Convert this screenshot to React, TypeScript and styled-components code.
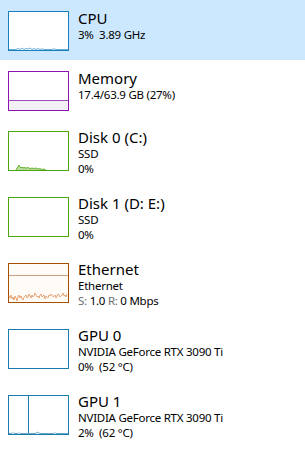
import React from "react";
import styled, { createGlobalStyle } from "styled-components";

const Global = createGlobalStyle`
  html, body { margin: 0; padding: 0; background: #ffffff; }
  body { font-family: "Segoe UI", "Noto Sans", "Open Sans", sans-serif; color: #000; }
`;

const List = styled.div`
  width: 305px;
  display: flex;
  flex-direction: column;
  background: #ffffff;
`;

const Row = styled.div<{ $lines: number; $selected?: boolean }>`
  display: flex;
  align-items: flex-start;
  gap: 9px;
  height: ${(p) => (p.$lines === 2 ? 60 : 66)}px;
  box-sizing: border-box;
  padding: 11px 0 0 8px;
  background: ${(p) => (p.$selected ? "#cce8ff" : "transparent")};
`;

const Graph = styled.svg`
  flex: none;
  display: block;
  width: 61px;
  height: 40px;
`;

const Info = styled.div<{ $lines: number }>`
  display: flex;
  flex-direction: column;
  margin-top: ${(p) => (p.$lines === 2 ? -2 : -3)}px;
`;

const Title = styled.div`
  font-size: 15px;
  line-height: 18px;
  color: #000;
  white-space: nowrap;
`;

const Sub = styled.div`
  font-size: 11.5px;
  letter-spacing: -0.25px;
  line-height: 15px;
  color: #000;
  white-space: nowrap;
`;

const Dim = styled.span`
  color: #6d6d6d;
`;

const Frame = ({ color, fill = "#ffffff" }: { color: string; fill?: string }) => (
  <rect x={0.5} y={0.5} width={60} height={39} fill={fill} stroke={color} strokeWidth={1} />
);

const CpuGraph = () => (
  <Graph viewBox="0 0 61 40">
    <Frame color="#1b7fbe" />
    <polyline
      points="1,38.5 8,38.5 10,37.5 12,38.5 14,37 16,38.5 18,37.5 20,38 22,37 24,38.5 26,37.5 28,38.5 30,37.5 32,38.5 34,37.8 36,38.5 44,38.5 46,37.8 48,38.5 60,38.5"
      fill="none"
      stroke="#6aaed8"
      strokeWidth={1}
    />
  </Graph>
);

const MemGraph = () => (
  <Graph viewBox="0 0 61 40">
    <Frame color="#8b12ae" />
    <rect x={1} y={29} width={59} height={10} fill="#f4f1f6" />
    <line x1={1} y1={29.5} x2={60} y2={29.5} stroke="#9c4fb8" strokeWidth={1} />
  </Graph>
);

const diskPts =
  "8,39 9,37 10,36 11,34 12,36 13,37 14,36 15,37 16,36.5 18,37 20,36.5 22,37.5 24,37 26,37.5 28,37 30,38 32,37.5 34,38.5 36,38 38,39";

const DiskGraph = ({ spikes }: { spikes?: boolean }) => (
  <Graph viewBox="0 0 61 40">
    <Frame color="#4da60c" />
    {spikes && (
      <>
        <polygon points={diskPts} fill="#b7dc9b" />
        <polyline points={diskPts} fill="none" stroke="#4da60c" strokeWidth={0.8} />
      </>
    )}
  </Graph>
);

const noise = [
  33, 35, 32, 36, 34, 37, 33, 35, 38, 34, 32, 35, 33, 36, 37, 34, 33, 32, 35, 34, 31, 33, 35, 32, 34, 33, 30,
  32, 34, 33, 35, 32, 31, 34, 33, 32, 36, 33, 34, 35, 32, 33, 31, 32, 34, 33, 32, 35, 33, 31, 32, 34, 33, 32,
  30, 33, 32, 34, 31,
];

const EthGraph = () => (
  <Graph viewBox="0 0 61 40">
    <Frame color="#a74f01" fill="#fffbf7" />
    <line x1={1} y1={12.5} x2={60} y2={12.5} stroke="#c8a183" strokeWidth={1} />
    <polyline
      points={noise.map((y, i) => `${1 + i},${y}`).join(" ")}
      fill="none"
      stroke="#e0915a"
      strokeWidth={0.8}
    />
  </Graph>
);

const GpuGraph = ({ spike }: { spike?: boolean }) => (
  <Graph viewBox="0 0 61 40">
    <Frame color="#1a7cab" />
    {spike && (
      <>
        <line x1={20.5} y1={1} x2={20.5} y2={39} stroke="#1a7cab" strokeWidth={1} />
        <polyline
          points="1,38.5 4,38.5 5,37.5 6,38.5 10,38.5 11,37.5 12,38.5 28,38.5 29,37 31,38 32,38.5 46,38.5 47,37.5 48,38.5 60,38.5"
          fill="none"
          stroke="#6aa8c8"
          strokeWidth={1}
        />
      </>
    )}
  </Graph>
);

export default function App() {
  return (
    <>
      <Global />
      <List>
        <Row $lines={2} $selected>
          <CpuGraph />
          <Info $lines={2}>
            <Title>CPU</Title>
            <Sub>3%&nbsp; 3.89 GHz</Sub>
          </Info>
        </Row>
        <Row $lines={2}>
          <MemGraph />
          <Info $lines={2}>
            <Title>Memory</Title>
            <Sub>17.4/63.9 GB (27%)</Sub>
          </Info>
        </Row>
        <Row $lines={3}>
          <DiskGraph spikes />
          <Info $lines={3}>
            <Title>Disk 0 (C:)</Title>
            <Sub>SSD</Sub>
            <Sub>0%</Sub>
          </Info>
        </Row>
        <Row $lines={3}>
          <DiskGraph />
          <Info $lines={3}>
            <Title>Disk 1 (D: E:)</Title>
            <Sub>SSD</Sub>
            <Sub>0%</Sub>
          </Info>
        </Row>
        <Row $lines={3}>
          <EthGraph />
          <Info $lines={3}>
            <Title>Ethernet</Title>
            <Sub>Ethernet</Sub>
            <Sub>
              <Dim>S:</Dim> 1.0 <Dim>R:</Dim> 0 Mbps
            </Sub>
          </Info>
        </Row>
        <Row $lines={3}>
          <GpuGraph />
          <Info $lines={3}>
            <Title>GPU 0</Title>
            <Sub>NVIDIA GeForce RTX 3090 Ti</Sub>
            <Sub>0%&nbsp; (52 °C)</Sub>
          </Info>
        </Row>
        <Row $lines={3}>
          <GpuGraph spike />
          <Info $lines={3}>
            <Title>GPU 1</Title>
            <Sub>NVIDIA GeForce RTX 3090 Ti</Sub>
            <Sub>2%&nbsp; (62 °C)</Sub>
          </Info>
        </Row>
      </List>
    </>
  );
}
